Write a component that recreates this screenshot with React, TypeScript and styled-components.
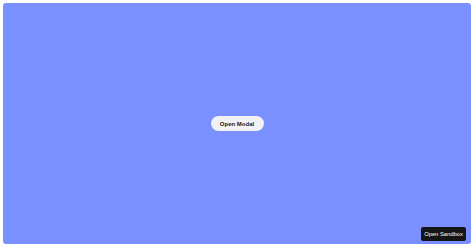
import React from 'react';
import styled, { createGlobalStyle } from 'styled-components';

const GlobalStyle = createGlobalStyle`
  html, body {
    margin: 0;
    padding: 0;
    background: #ffffff;
    font-family: "Liberation Sans", Arial, sans-serif;
  }
`;

const Page = styled.div`
  width: 474px;
  height: 248px;
  padding: 3px 3px 4px;
  box-sizing: border-box;
  position: relative;
`;

const Frame = styled.div`
  height: 100%;
  background: #7b90ff;
  border-radius: 3px;
  display: flex;
  align-items: center;
  justify-content: center;
`;

const ModalButton = styled.button`
  font-family: "Liberation Sans", Arial, sans-serif;
  font-size: 6px;
  font-weight: 700;
  color: #1a1a1a;
  background: #f2f2f5;
  border: none;
  border-radius: 999px;
  height: 15px;
  width: 53px;
  padding: 0;
  cursor: pointer;
`;

const SandboxButton = styled.button`
  position: absolute;
  right: 8px;
  bottom: 7px;
  height: 14px;
  width: 45px;
  padding: 0;
  font-family: "Liberation Sans", Arial, sans-serif;
  font-size: 5.8px;
  color: #ffffff;
  background: #151515;
  border: none;
  border-radius: 2px;
`;

function App() {
  return (
    <>
      <GlobalStyle />
      <Page>
        <Frame>
          <ModalButton>Open Modal</ModalButton>
        </Frame>
        <SandboxButton>Open Sandbox</SandboxButton>
      </Page>
    </>
  );
}

export default App;
